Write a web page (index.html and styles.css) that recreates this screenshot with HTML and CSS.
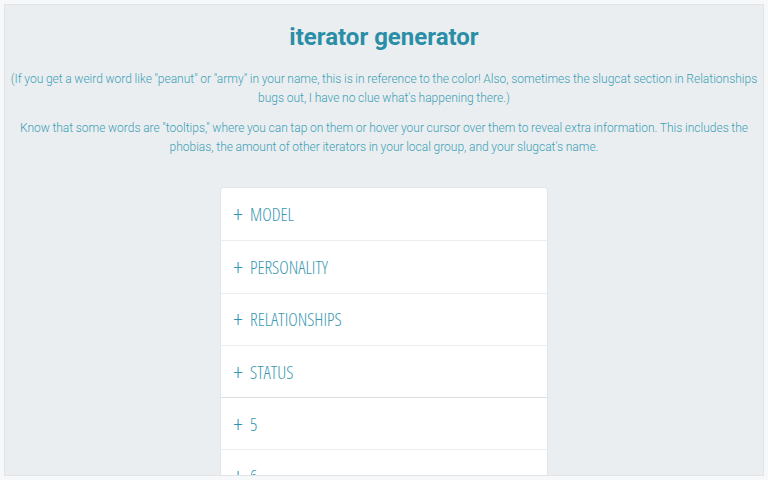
FILE: index.html
```html
<!DOCTYPE html>
<html lang="en">
<head>
<meta charset="utf-8">
<title>iterator generator</title>
<link rel="stylesheet" href="styles.css">
</head>
<body>
<div class="frame">
  <main class="panel">
    <h1 class="title">iterator generator</h1>
    <p class="note">(If you get a weird word like "peanut" or "army" in your name, this is in reference to the color! Also, sometimes the slugcat section in Relationships bugs out, I have no clue what's happening there.)</p>
    <p class="note">Know that some words are "tooltips," where you can tap on them or hover your cursor over them to reveal extra information. This includes the phobias, the amount of other iterators in your local group, and your slugcat's name.</p>
    <section class="accordion">
      <div class="row"><span class="plus">+</span><span class="label">MODEL</span></div>
      <div class="row"><span class="plus">+</span><span class="label">PERSONALITY</span></div>
      <div class="row"><span class="plus">+</span><span class="label">RELATIONSHIPS</span></div>
      <div class="row row-strong"><span class="plus">+</span><span class="label">STATUS</span></div>
      <div class="row"><span class="plus">+</span><span class="label">5</span></div>
      <div class="row"><span class="plus">+</span><span class="label">6</span></div>
    </section>
  </main>
</div>
</body>
</html>
```

FILE: styles.css
```css
html, body {
  margin: 0;
  padding: 0;
  background: #f7f8f9;
}
body {
  font-family: Roboto, "Liberation Sans", sans-serif;
}
.frame {
  padding: 4px 4px 0 4px;
}
.panel {
  height: 472px;
  box-sizing: border-box;
  overflow: hidden;
  background: #eaeef1;
  border: 1px solid #e0e4e7;
  padding: 18px 0 0 0;
  text-align: center;
}
.title {
  margin: 0;
  font-size: 24px;
  line-height: 28px;
  font-weight: 700;
  color: #2a8ea7;
}
.note {
  margin: 19px 0 0 0;
  font-size: 12px;
  line-height: 19px;
  font-weight: 300;
  word-spacing: -0.3px;
  color: #3d9fb5;
}
.note + .note {
  margin-top: 11px;
}
.accordion {
  width: 326px;
  margin: 30px auto 0 auto;
  background: #ffffff;
  border: 1px solid #e2e6e9;
  border-radius: 4px;
  text-align: left;
}
.row {
  height: 52.3px;
  box-sizing: border-box;
  display: flex;
  align-items: center;
  gap: 5px;
  padding: 0 0 0 10px;
  border-top: 1px solid #ebedef;
  font-family: "Open Sans", "DejaVu Sans", sans-serif;
  font-stretch: 75%;
  font-weight: 300;
  font-size: 18px;
  color: #3a98b0;
}
.row:first-child {
  border-top: 0;
}
.row-strong + .row {
  border-top-color: #d9dee2;
}
.plus {
  font-size: 23px;
  width: 14px;
  text-align: center;
  color: #2f95ae;
}
```
